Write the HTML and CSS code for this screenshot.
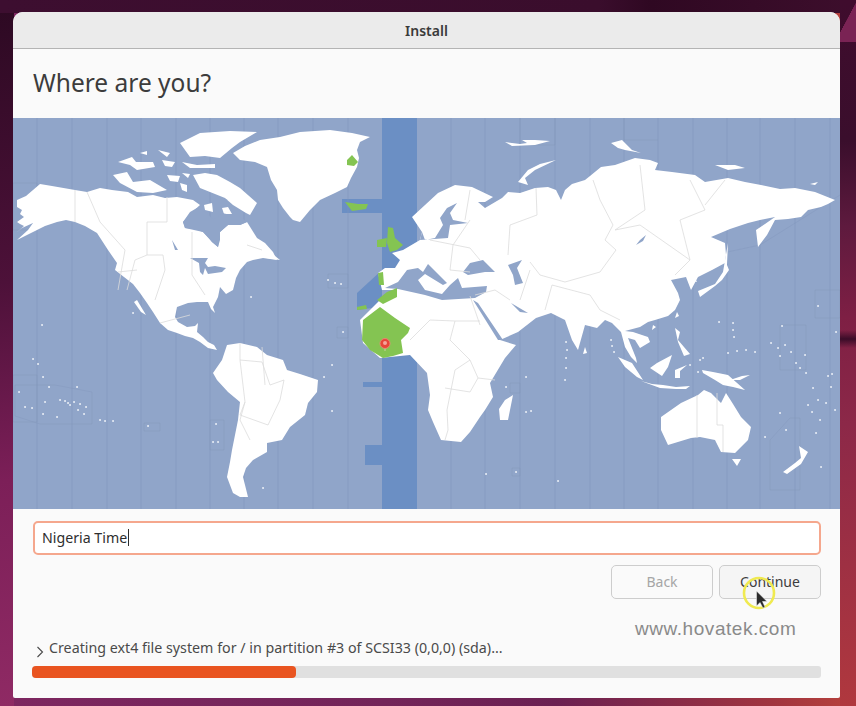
FILE: index.html
```html
<!DOCTYPE html>
<html lang="en">
<head>
<meta charset="utf-8">
<title>Install</title>
<link rel="stylesheet" href="styles.css">
</head>
<body>
<main class="window">
  <header class="titlebar">Install</header>
  <h1 class="heading">Where are you?</h1>
  <svg class="map" viewBox="13 118 827 391" aria-label="World time zone map">
    <rect class="sea" x="13" y="118" width="827" height="391"/>
    <path class="zone" d="M382 118H417V270H382ZM342 199H382V213H342ZM357 293L382 270V300L380 307L357 310ZM382 352H417V509H382ZM363 382H382V387H363ZM365 445H382V465H365Z"/>
    <path class="tz" d="M37 118V509M72 118V509M107 118V509M141 118V509M176 118V509M210 118V509M244 118V509M278 118V509M313 118V509M348 118V509M451 118V509M485 118V509M520 118V509M555 118V509M590 118V509M624 118V509M658 118V509M693 118V509M727 118V509M760 118V509M795 118V509M830 118V509"/>
    <path class="tz-soft" d="M13 375H37V422H13ZM13 183H37V230H13ZM15 385H55L92 392V424H40L15 416ZM328 274H348V288H328ZM337 327H348V338H337ZM144 423H160V431H144ZM210 420H224V450H210ZM780 325H806V370H780ZM770 440L790 418H800V490H770ZM815 290H840V318H815ZM510 383H520V393H510ZM512 468H520V476H512ZM690 260L760 245 840 195M520 118V145H555V118M624 118V140H658"/>

    <g class="land">
      <path d="M16 233L24 226 20 224 17 222 24 217 20 214 22 210 17 207 17 200 26 196 40 184 52 186 75 190 87 192 100 188 112 190 128 192 137 197 153 195 165 198 177 197 193 200 200 205 190 214 183 222 185 228 195 229 203 232 209 238 212 242 218 247 220 240 220 232 228 225 240 225 247 222 252 230 257 238 265 243 273 252 277 260 263 258 253 260 247 262 240 270 236 278 233 290 226 294 220 287 218 297 213 307 215 313 211 309 208 302 197 302 188 303 177 307 175 317 178 322 187 327 195 326 198 323 197 332 203 337 208 342 214 345 217 350 208 348 200 342 193 338 185 336 177 333 168 330 160 323 153 312 147 303 140 293 133 284 124 277 115 270 117 263 108 250 97 233 85 226 75 222 66 220 57 222 45 226 33 232 17 240 28 230 33 223 22 228Z"/>
      <path d="M137 300L146 315 141 312 134 302Z"/>
      <path d="M233 153L245 146 260 140 280 137 300 132 330 130 352 133 370 137 360 142 357 150 359 158 357 167 351 178 347 187 335 193 320 200 310 210 300 222 293 220 290 217 283 208 278 200 277 190 271 180 267 167 255 162 240 160Z"/>
      <path d="M113 175L127 172 133 182 150 180 167 190 153 193 137 192 120 183ZM118 162L132 157 136 162 153 162 155 167 137 170 130 165ZM140 153L147 151 147 155ZM158 150L170 153 167 157ZM162 160L175 162 172 167 165 166ZM182 162L197 165 215 164 215 168 190 168ZM167 175L180 176 178 182 170 181ZM182 173L190 174 188 178ZM180 183L187 185 187 192 182 190ZM180 143L200 133 230 131 257 132 240 142 232 148 220 158 205 156 190 157ZM193 175L205 173 217 175 230 182 240 188 257 203 250 215 246 213 233 205 225 198 210 192 200 188ZM204 205L212 203 213 212 205 210ZM228 192L236 200 226 199ZM222 208L228 207 232 214 224 214Z"/>
      <path d="M378 273L385 268 395 268 400 260 392 253 403 250 420 240 422 232 412 217 425 205 438 193 455 185 472 187 493 197 485 202 478 202 485 208 502 198 508 192 520 193 535 188 548 187 556 190 561 200 565 190 572 184 585 180 590 176 601 167 615 165 635 158 650 160 658 163 655 170 672 172 695 175 705 182 728 178 745 182 761 185 780 189 795 188 815 192 835 200 828 204 821 207 808 210 801 217 788 219 775 220 767 235 758 247 756 230 765 224 775 217 760 220 748 223 730 229 711 237 725 243 726 255 725 263 712 270 698 277 691 290 686 277 671 280 678 293 680 300 675 310 668 316 655 320 648 322 640 327 625 331 633 332 648 337 650 342 640 348 635 340 628 338 636 358 637 363 631 357 625 347 621 332 612 323 605 320 597 328 585 325 578 350 572 340 565 320 551 313 536 318 518 332 500 340 516 345 505 358 490 383 493 397 485 410 480 417 470 432 461 442 441 440 433 422 428 410 430 395 427 373 410 355 380 358 363 343 360 320 380 300 397 290 382 290Z"/>
      <path d="M227 345L240 343 257 347 267 355 283 360 287 370 300 374 318 380 317 392 308 403 305 415 290 427 282 440 267 443 267 452 253 460 246 468 243 477 248 497 240 497 233 493 227 477 230 462 232 450 235 435 238 420 240 402 228 392 217 380 213 373 222 360Z"/>
      <path d="M661 417L681 403 698 395 704 390 711 393 721 403 726 393 733 404 741 417 751 427 748 440 735 453 721 452 715 440 700 437 691 438 668 445 661 430ZM732 459L741 459 737 466ZM808 452L799 446 801 458 795 463 783 472 787 474 801 464ZM513 395L510 410 508 420 500 420 499 409 505 400ZM702 370L713 372 728 375 745 390 733 387 723 385 715 380 703 373ZM730 380L742 376 750 375 740 380ZM672 355L668 367 662 376 650 368 657 363ZM618 357L632 363 643 380 637 377 625 367ZM641 381L652 384 663 385 676 387 690 386 686 389 676 389 660 388ZM675 370L687 365 680 371 680 378 675 378ZM675 328L680 332 678 340 690 354 684 356 678 342ZM653 325L656 327 652 330ZM677 312L679 316 675 318ZM585 347L587 353 583 354ZM728 243L727 265 729 270 722 280 715 286 700 297 698 291 715 284 723 272ZM691 270L697 282 690 280ZM556 160L540 164 528 170 518 182 528 185 525 178 535 170ZM505 142L520 144 527 143 522 140 535 140 550 141 535 145 512 146ZM611 143L622 140 632 150 641 153 625 150 618 148ZM715 165L735 165 745 168 728 170ZM810 184L818 182 815 185Z"/>
      <path d="M270 252L280 260 266 258Z"/>
    </g>

    <g class="water">
      <path d="M183 222L190 212 197 208 207 213 213 220 222 213 240 217 247 222 240 225 228 225 220 232 218 247 212 242 203 232 185 228ZM172 240L178 250 175 250ZM190 258L208 258 205 263 208 267 215 266 226 268 222 272 208 274 205 268 203 275 200 272 199 263ZM457 203L447 208 440 218 443 225 435 238 425 240 422 232 420 240 448 238 450 225 468 223 453 220 450 213ZM463 272L470 263 483 260 495 272 485 272 468 275ZM508 265L522 260 517 268 523 283 515 285 513 275ZM385 288L398 282 407 270 418 268 423 272 428 264 447 283 443 285 425 274 418 280 425 290 442 294 450 285 458 278 462 288 487 286 486 292 475 298 442 300 425 295 398 289ZM473 300L478 303 503 340 498 340ZM511 303L528 313 520 312ZM640 240L646 235 643 241 636 245Z"/>
    </g>

    <g class="border">
      <path d="M75 190V222M87 192L100 222 125 250 118 290M147 222L167 222M167 197V222M147 222V255L163 255 165 270 155 300M192 232V275L205 295M147 255L135 260 127 290M118 272L137 270M160 323L190 315M247 245L262 250"/>
      <path d="M240 343L240 360 245 402 240 415 268 425 280 400 284 380M240 360L262 362 270 385 284 380M262 347L265 385M245 402L240 420 250 440"/>
      <path d="M697 395V438M717 393V425H723V452"/>
      <path d="M470 220L453 245 450 270 470 272M470 190L465 220M536 188L537 215 510 225 508 255M530 262L540 275 565 282 600 272 616 250 605 240 613 225 600 200 593 180M640 165L645 210 615 230 640 225 690 260 675 275M690 180L705 210 680 220 690 260M725 180L705 205M430 240L470 248 480 260M545 310L552 285 590 295 600 310 620 320M530 270L520 300M510 300L495 290 475 295"/>
      <path d="M455 321H480M455 321L450 340 470 360 455 370 447 410 448 430 445 440M470 360L478 378 495 380M430 320L455 321M445 388L470 392 478 378M410 340L430 320M470 296L480 325"/>
    </g>

    <g class="tz-green">
      <path d="M388 227L393 228 395 238 403 245 397 250 390 252 387 243ZM377 240L387 238 386 247 377 247ZM345 202L358 204 368 204 366 209 352 211ZM347 160L352 155 358 162 354 166 347 165ZM378 273L383 272 384 285 379 285Z"/>
      <path d="M397 288L397 297 383 304 377 300 387 292ZM357 307L366 305 367 309 357 310Z"/>
      <path d="M380 307L395 318 410 328 408 333 401 340 403 353 393 356 383 358 370 350 362 340 363 320Z"/>
    </g>

    <path class="isles" d="M42 325h.1M33 359h.1M38 364h.1M43 377h.1M49 387h.1M77 387h.1M19 392h.1M45 402h.1M25 407h.1M32 408h.1M43 414h.1M57 417h.1M60 400h.1M65 401h.1M68 403h.1M70 405h.1M74 402h.1M80 404h.1M86 407h.1M78 410h.1M84 414h.1M100 420h.1M105 421h.1M113 421h.1M148 426h.1M216 424h.1M213 442h.1M218 442h.1M332 365h.1M324 377h.1M332 411h.1M343 332h.1M328 280h.1M335 283h.1M341 284h.1M251 297h.1M133 313h.1M263 488h.1M526 377h.1M506 387h.1M526 412h.1M531 411h.1M486 474h.1M516 472h.1M558 481h.1M566 342h.1M567 350h.1M566 358h.1M566 368h.1M565 380h.1M611 340h.1M612 346h.1M614 352h.1M719 322h.1M733 323h.1M733 330h.1M734 337h.1M782 326h.1M771 343h.1M778 348h.1M785 345h.1M791 352h.1M780 356h.1M805 355h.1M796 363h.1M800 368h.1M806 373h.1M818 306h.1M836 332h.1M728 353h.1M737 351h.1M746 350h.1M755 352h.1M703 358h.1M828 376h.1M832 374h.1M813 388h.1M831 387h.1M808 405h.1M818 400h.1M826 403h.1M835 410h.1M812 412h.1M820 420h.1M816 433h.1M780 413h.1M786 430h.1M765 437h.1M821 467h.1M690 365h.1M698 372h.1M700 360h.1"/>

    <path class="pin-tail" d="M385 348V351"/>
    <circle class="pin" cx="385" cy="343.5" r="5"/>
    <circle class="pin-core" cx="385" cy="343" r="2"/>
  </svg>

  <section class="controls">
    <div class="field"><span>Nigeria Time</span><i class="caret"></i></div>
    <div class="actions">
      <button class="btn btn-off" type="button">Back</button>
      <button class="btn" type="button">Continue</button>
    </div>
    <div class="status">
      <svg class="chevron" viewBox="0 0 8 12"><path d="M1.5 1L6.5 6 1.5 11"/></svg>
      <span>Creating ext4 file system for / in partition #3 of SCSI33 (0,0,0) (sda)...</span>
    </div>
    <div class="bar"><div class="fill"></div></div>
  </section>

  <div class="watermark">www.hovatek.com</div>
  <svg class="pointer" viewBox="0 0 34 34">
    <circle class="halo" cx="17" cy="17" r="15"/>
    <path class="arrow" d="M14.5 15V30L18 26.5 21 32 23 31 20.5 25.5H25Z"/>
  </svg>
</main>
</body>
</html>
```

FILE: styles.css
```css
* { box-sizing: border-box; }
html, body { margin: 0; height: 100%; }
body {
  width: 856px;
  height: 706px;
  overflow: hidden;
  padding: 12px 16px 8px 13px;
  font-family: "Noto Sans", "Open Sans", sans-serif;
  background:
    linear-gradient(118deg, transparent 0 50%, #7a2354 51% 100%) right 0 top 0 / 20px 42px no-repeat,
    linear-gradient(180deg, transparent 0, #3a0c28 50%, transparent 100%) right 0 top 330px / 16px 18px no-repeat,
    linear-gradient(180deg, #3f0c2d 0, #3a0e2c 20%, #5e1a3e 32%, #7e1f44 45%, #8c2848 60%, #b0383e 100%) right 0 top 0 / 16px 100% no-repeat,
    linear-gradient(90deg, #3d0e30 0, #3a0d2c 70%, #2f0822 76%, #3d0e2c 100%) top left / 100% 13px no-repeat,
    linear-gradient(172deg, #2c0922 0, #4d1139 40%, #7c1f58 68%, #8f2a64 100%) left top / 14px 100% no-repeat,
    linear-gradient(90deg, #7d2660 0, #732459 45%, #6b2052 65%, #a0343f 90%, #b8423c 100%);
}
.window {
  position: relative;
  width: 827px;
  height: 686px;
  display: flex;
  flex-direction: column;
  background: #fafafa;
  border-radius: 10px 10px 2px 2px;
  overflow: hidden;
  color: #3d3d3d;
}
.titlebar {
  height: 37px;
  flex: none;
  display: flex;
  align-items: center;
  justify-content: center;
  background: #ebebeb;
  border-bottom: 1px solid #b4b4b4;
  font-size: 14px;
  font-weight: 600;
  color: #3a3a3a;
}
.heading {
  height: 69px;
  flex: none;
  margin: 0;
  padding: 0 0 2px 20px;
  display: flex;
  align-items: center;
  font-size: 24.5px;
  font-weight: 400;
  color: #3c3c3c;
}
.map { display: block; flex: none; width: 827px; height: 391px; filter: blur(.4px); }
.sea { fill: #90a5c9; }
.zone { fill: #6b8fc4; }
.tz { fill: none; stroke: #7f95bb; stroke-width: 1; opacity: .55; }
.tz-soft { fill: none; stroke: #8196bb; stroke-width: 1; opacity: .4; }
.land { fill: #fff; }
.water { fill: #90a5c9; }
.border { fill: none; stroke: #dcdcdc; stroke-width: .8; }
.tz-green { fill: #84c452; }
.isles { fill: none; stroke: #eef2f8; stroke-width: 1.8; stroke-linecap: round; }
.pin { fill: #e6473a; stroke: #f08a7c; stroke-width: .8; }
.pin-core { fill: #f6a59b; }
.pin-tail { stroke: #c9cfa0; stroke-width: 1; }
.controls {
  flex: 1;
  padding: 12px 19px 0 20px;
  display: flex;
  flex-direction: column;
}
.field {
  height: 34px;
  display: flex;
  align-items: center;
  padding: 0 0 2px 7px;
  background: #fff;
  border: 2px solid #f5a78d;
  border-radius: 5px;
  font-size: 14.2px;
  color: #2e2e2e;
}
.caret { width: 1px; height: 17px; background: #2e2e2e; margin-left: 1px; }
.actions {
  display: flex;
  justify-content: flex-end;
  gap: 6px;
  margin-top: 10px;
}
.btn {
  width: 102px;
  height: 34px;
  padding: 0 0 2px;
  background: #f5f5f5;
  border: 1px solid #cdcdcd;
  border-radius: 5px;
  font: 14px "Noto Sans", "Open Sans", sans-serif;
  color: #3d3d3d;
}
.btn-off { background: #fafafa; color: #a6a6a6; }
.status {
  display: flex;
  align-items: center;
  margin-top: 38px;
  height: 20px;
  font-size: 14.25px;
  color: #4a4a4a;
  white-space: nowrap;
}
.status span { margin-left: 5px; }
.chevron { width: 8px; height: 12px; margin: 10px 0 0 3px; flex: none; fill: none; stroke: #4a4a4a; stroke-width: 1.1; }
.bar {
  margin: 9px 0 0 -1px;
  height: 12px;
  border-radius: 3px;
  background: #e0e0e0;
}
.fill { width: 264px; height: 100%; border-radius: 4px; background: #e95420; }
.watermark {
  position: absolute;
  left: 622px;
  top: 606px;
  font-family: "Liberation Sans", Arial, sans-serif;
  font-size: 19px;
  letter-spacing: .55px;
  color: #8a8a8a;
}
.pointer { position: absolute; left: 729px; top: 564px; width: 34px; height: 34px; }
.halo { fill: none; stroke: #f0ea50; stroke-width: 2.6; }
.arrow { fill: #2b2b2b; stroke: #f4f4f4; stroke-width: .5; }
```
